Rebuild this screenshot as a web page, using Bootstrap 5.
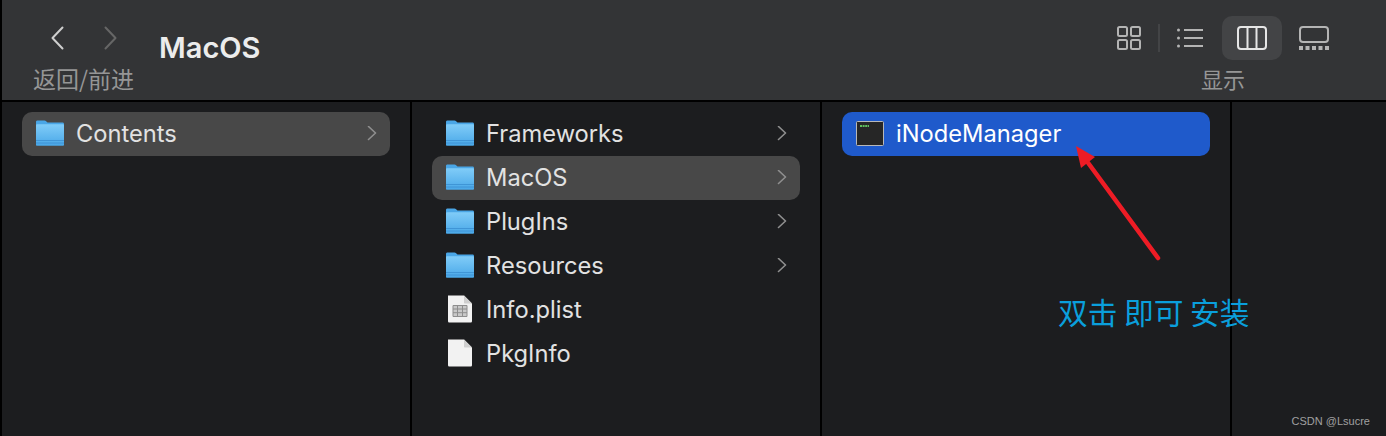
<!DOCTYPE html>
<html lang="en">
<head>
    <meta charset="UTF-8">
    <meta name="viewport" content="width=device-width, initial-scale=1.0">
    <title>MacOS</title>
    <link href="https://cdn.jsdelivr.net/npm/bootstrap@5.3.0/dist/css/bootstrap.min.css" rel="stylesheet">
    <style>
        html, body { height: 100%; }
        body { background: #000; font-family: Inter, "Noto Sans CJK SC", sans-serif; overflow: hidden; }
        .finder { width: 1386px; height: 436px; position: relative; padding-left: 2px; }
        .toolbar { height: 100px; background: #333436; padding-left: 31px; }
        .nav-group { width: 102px; }
        .nav-btns { height: 66px; padding: 26px 0 0 18px; gap: 40px; }
        .tool-label { font-size: 22px; line-height: 24px; color: #969696; font-family: "Noto Sans CJK SC", sans-serif; }
        .nav-group .tool-label { font-size: 23px; }
        .folder-title { font-size: 29px; font-weight: 600; color: #ececec; margin: 30px 0 0 24px; line-height: 36px; }
        .view-group { width: 212px; margin-right: 57px; }
        .view-btns { height: 66px; padding-top: 16px; }
        .view-btn { width: 60px; height: 44px; border-radius: 10px; margin-left: 19px; margin-right: 17px; }
        .view-btn.on { background: #434446; }
        .view-slot { height: 44px; }
        .view-sep { width: 2px; height: 28px; background: #434446; margin: 0 17px; }
        .columns { height: 334px; margin-top: 2px; gap: 2px; }
        .pane { width: 408px; background: #1c1d1f; padding: 10px 20px; }
        .pane.rest { width: 154px; }
        .row-item { height: 44px; border-radius: 10px; padding-left: 13px; padding-right: 13px; color: #e2e2e2; font-size: 23.7px; }
        .row-item.grey { background: #484848; }
        .row-item.blue { background: #1f5acb; color: #fff; }
        .row-icon { width: 30px; height: 30px; margin-right: 11px; flex: none; }
        .chev { margin-left: auto; flex: none; }
        .note-arrow { position: absolute; left: 1070px; top: 140px; }
        .note-text { position: absolute; left: 1058px; top: 293px; color: #0a9fdc; font-size: 29.7px; line-height: 38px; font-family: "Noto Sans CJK SC", sans-serif; white-space: nowrap; }
        .mark-text { position: absolute; right: 16px; top: 413px; color: #a0a0a0; font-size: 11px; line-height: 16px; font-family: "Liberation Sans", sans-serif; }
    </style>
</head>
<body>
    <svg width="0" height="0" class="d-block">
        <defs>
            <linearGradient id="fold" x1="0" y1="0" x2="0" y2="1">
                <stop offset="0" stop-color="#80ccf8"/>
                <stop offset="1" stop-color="#4aa8e8"/>
            </linearGradient>
            <symbol id="folder" viewBox="0 2.500 30 30">
                <path d="M1 5.500C1 4.500 1.600 4 2.500 4h7c.7 0 1.100.3 1.600.8L12.500 6H27.500C28.500 6 29 6.600 29 7.500V28c0 .6-.5 1-1 1H2c-.6 0-1-.4-1-1Z" fill="#4aa6e6"/>
                <path d="M1 9c0-.8.5-1.200 1.200-1.200h25.600c.7 0 1.200.4 1.200 1.200v19c0 .6-.5 1-1 1H2c-.6 0-1-.4-1-1Z" fill="url(#fold)"/>
                <path d="M1 24h28M1 26.500h28" stroke="#3a8ed0" stroke-width=".8"/>
            </symbol>
            <symbol id="chev" viewBox="0 0 10 16">
                <path d="M1.500 .5 8.500 7 1.500 13.500" fill="none" stroke="#8f8f8f" stroke-width="1.600" stroke-linecap="round" stroke-linejoin="round"/>
            </symbol>
        </defs>
    </svg>

    <div class="finder">
        <!-- Toolbar -->
        <div class="toolbar d-flex">
            <div class="nav-group d-flex flex-column">
                <div class="nav-btns d-flex align-items-start">
                    <svg width="13" height="24" viewBox="0 0 13 24"><path d="M11.500 1.500 1.500 12 11.500 22.500" fill="none" stroke="#cfcfcf" stroke-width="2" stroke-linecap="round" stroke-linejoin="round"/></svg>
                    <svg width="13" height="24" viewBox="0 0 13 24"><path d="M1.500 1.500 11.500 12 1.500 22.500" fill="none" stroke="#666" stroke-width="2" stroke-linecap="round" stroke-linejoin="round"/></svg>
                </div>
                <div class="tool-label text-nowrap">返回/前进</div>
            </div>
            <div class="folder-title">MacOS</div>
            <div class="view-group ms-auto d-flex flex-column align-items-center">
                <div class="view-btns d-flex align-items-start">
                    <div class="view-slot d-flex align-items-center">
                        <svg width="24" height="24" viewBox="0 0 24 24" fill="none" stroke="#b4b4b4" stroke-width="2">
                            <rect x="1" y="1" width="9" height="9" rx="1.500"/><rect x="14" y="1" width="9" height="9" rx="1.500"/>
                            <rect x="1" y="14" width="9" height="9" rx="1.500"/><rect x="14" y="14" width="9" height="9" rx="1.500"/>
                        </svg>
                        <div class="view-sep"></div>
                        <svg width="26" height="20" viewBox="0 0 26 20" fill="none" stroke="#b4b4b4" stroke-width="2">
                            <path d="M7 2h19M7 10h19M7 18h19"/>
                            <circle cx="1.500" cy="2" r="1.500" fill="#b4b4b4" stroke="none"/><circle cx="1.500" cy="10" r="1.500" fill="#b4b4b4" stroke="none"/><circle cx="1.500" cy="18" r="1.500" fill="#b4b4b4" stroke="none"/>
                        </svg>
                    </div>
                    <div class="view-btn on d-flex align-items-center justify-content-center">
                        <svg width="30" height="24" viewBox="0 0 30 24" fill="none" stroke="#e6e6e6" stroke-width="2">
                            <rect x="1" y="1" width="28" height="22" rx="3"/><path d="M10.500 1v22M19.500 1v22"/>
                        </svg>
                    </div>
                    <div class="view-slot d-flex align-items-center">
                        <svg width="30" height="24" viewBox="0 0 30 24" fill="none" stroke="#b4b4b4" stroke-width="2">
                            <rect x="1" y="1" width="28" height="15" rx="3"/>
                            <path d="M0 22h4M6.500 22h4M13 22h4M19.500 22h4M26 22h4" stroke-width="4"/>
                        </svg>
                    </div>
                </div>
                <div class="tool-label">显示</div>
            </div>
        </div>

        <!-- Columns -->
        <div class="columns d-flex">
            <div class="pane">
                <div class="row-item grey d-flex align-items-center">
                    <svg class="row-icon"><use href="#folder"/></svg>Contents
                    <svg class="chev" width="10" height="16"><use href="#chev"/></svg>
                </div>
            </div>
            <div class="pane">
                <div class="row-item d-flex align-items-center">
                    <svg class="row-icon"><use href="#folder"/></svg>Frameworks
                    <svg class="chev" width="10" height="16"><use href="#chev"/></svg>
                </div>
                <div class="row-item grey d-flex align-items-center">
                    <svg class="row-icon"><use href="#folder"/></svg>MacOS
                    <svg class="chev" width="10" height="16"><use href="#chev"/></svg>
                </div>
                <div class="row-item d-flex align-items-center">
                    <svg class="row-icon"><use href="#folder"/></svg>PlugIns
                    <svg class="chev" width="10" height="16"><use href="#chev"/></svg>
                </div>
                <div class="row-item d-flex align-items-center">
                    <svg class="row-icon"><use href="#folder"/></svg>Resources
                    <svg class="chev" width="10" height="16"><use href="#chev"/></svg>
                </div>
                <div class="row-item d-flex align-items-center">
                    <svg class="row-icon" viewBox="0 0 30 30">
                        <path d="M3 .5h16l8 8V26c0 1-.6 1.500-1.500 1.500h-21C3.600 27.500 3 27 3 26Z" fill="#f2f2f2"/>
                        <path d="M19 .5l8 8h-7c-.6 0-1-.4-1-1Z" fill="#cfcfcf"/>
                        <path d="M8 10.500h14v11H8ZM8 14h14M8 17.700h14M12.500 10.500v11M17.500 10.500v11" fill="#c9c9c9" stroke="#8e8e8e" stroke-width="1"/>
                    </svg>Info.plist
                </div>
                <div class="row-item d-flex align-items-center">
                    <svg class="row-icon" viewBox="0 0 30 30">
                        <path d="M3 .5h16l8 8V26c0 1-.6 1.500-1.500 1.500h-21C3.600 27.500 3 27 3 26Z" fill="#f2f2f2"/>
                        <path d="M19 .5l8 8h-7c-.6 0-1-.4-1-1Z" fill="#cfcfcf"/>
                    </svg>PkgInfo
                </div>
            </div>
            <div class="pane">
                <div class="row-item blue d-flex align-items-center">
                    <svg class="row-icon" viewBox="0 0 30 30">
                        <rect x="1.500" y="2.500" width="27" height="24" rx="1" fill="#262626" stroke="#b8b8b8" stroke-width="1"/>
                        <path d="M5 7h9" stroke="#5fbf5f" stroke-width="2" stroke-dasharray="2 .6"/>
                    </svg>iNodeManager
                </div>
            </div>
            <div class="pane rest"></div>
        </div>

        <!-- Annotation drawn on top of the screenshot -->
        <svg class="note-arrow" width="100" height="125" viewBox="0 0 100 125">
            <path d="M88 118 16 20" stroke="#ee1c25" stroke-width="4.500" stroke-linecap="round"/>
            <path d="M6 6 25 17 11 28Z" fill="#ee1c25"/>
        </svg>
        <div class="note-text">双击 即可 安装</div>
        <div class="mark-text">CSDN @Lsucre</div>
    </div>
</body>
</html>
